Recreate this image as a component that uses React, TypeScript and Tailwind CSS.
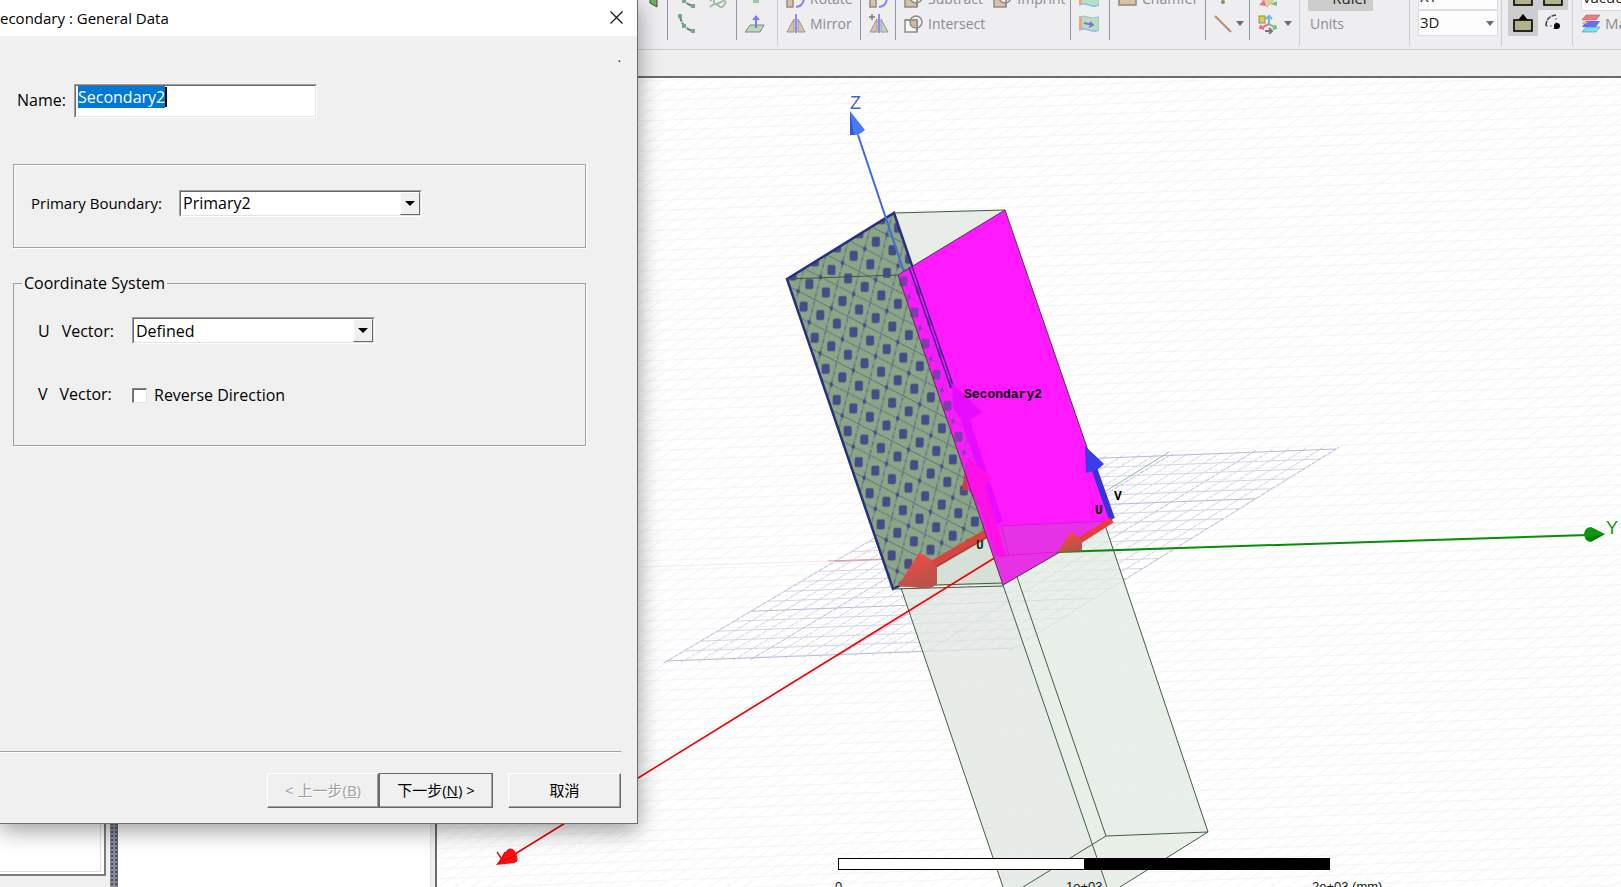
import React, { useEffect, useRef } from "react";

type Point = [number, number];

const GRID_STEPS = 20;
// corners of the drawing plane grid: near-left, near-right, far-left, far-right
const NL: Point = [667, 661];
const NR: Point = [1014, 648];
const FL: Point = [1003, 462];
const FR: Point = [1336, 449];

const lerp = (a: Point, b: Point, t: number): Point => [
  a[0] + (b[0] - a[0]) * t,
  a[1] + (b[1] - a[1]) * t,
];

const gridLines = Array.from({ length: GRID_STEPS + 1 }, (_, i) => {
  const t = i / GRID_STEPS;
  const near = lerp(NL, NR, t);
  const far = lerp(FL, FR, t);
  return {
    major: i % 5 === 0,
    across: [lerp(NL, FL, t), lerp(NR, FR, t)],
    along: [lerp(near, far, -0.01), lerp(near, far, 1.01)],
  };
});

const BackgroundGrid = () => (
  <g stroke="#f5f5f5" strokeWidth="1">
    {Array.from({ length: 88 }, (_, i) => (
      <line key={`h${i}`} x1="400" y1={80 + i * 10} x2="1640" y2={34 + i * 10} />
    ))}
    {Array.from({ length: 150 }, (_, i) => (
      <line key={`d${i}`} x1={430 + i * 17} y1="78" x2={430 + i * 17 - 1340} y2="900" />
    ))}
  </g>
);

const PlaneGrid = () => (
  <g strokeWidth="1">
    {gridLines.map((line, i) => (
      <g key={i} stroke={line.major ? "#b8b8dc" : "#d3d3e7"}>
        <line x1={line.across[0][0]} y1={line.across[0][1]} x2={line.across[1][0]} y2={line.across[1][1]} />
        <line
          x1={line.along[0][0]}
          y1={line.along[0][1]}
          x2={line.along[1][0]}
          y2={line.along[1][1]}
          strokeDasharray="5 1"
        />
      </g>
    ))}
  </g>
);

// keeps the mesh markers upright inside the skewed pattern cell
const MeshDot = ({ x, y }: { x: number; y: number }) => (
  <g transform={`translate(${x} ${y}) matrix(1.069 -0.402 0.265 0.785 0 0)`}>
    <rect x="-4" y="-5" width="8" height="10" rx="2" />
  </g>
);

const Scene = () => (
  <svg
    viewBox="437 78 1184 809"
    preserveAspectRatio="xMinYMin slice"
    className="block h-full w-full"
    role="img"
    aria-label="3D modeler view"
  >
    <defs>
      <pattern
        id="mesh"
        width="40"
        height="40"
        patternUnits="userSpaceOnUse"
        patternTransform="matrix(0.83 0.425 -0.28 1.13 803.8 268.5)"
      >
        <path d="M0 0H40M0 20H40M0 40H40" stroke="#4f5b8c" strokeWidth="0.9" strokeDasharray="2 1" />
        <path d="M0 0V40M20 0V40M40 0V40" stroke="#4f5b8c" strokeWidth="1.1" strokeDasharray="4 1 1 1" />
        <g fill="#454c88">
          <MeshDot x={10} y={10} />
          <MeshDot x={30} y={10} />
          <MeshDot x={10} y={30} />
          <MeshDot x={30} y={30} />
          <circle cx="20" cy="0" r="2" />
          <circle cx="20" cy="40" r="2" />
          <circle cx="0" cy="20" r="2" />
          <circle cx="40" cy="20" r="2" />
        </g>
      </pattern>
      <linearGradient id="cone" x1="0" y1="0" x2="0.4" y2="1">
        <stop offset="0.3" stopColor="#ea4a48" />
        <stop offset="1" stopColor="#b9524a" />
      </linearGradient>
    </defs>

    <BackgroundGrid />
    <PlaneGrid />

    <line x1="640" y1="567" x2="828" y2="561" stroke="#fbe6e6" />
    <line x1="828" y1="561" x2="996" y2="555" stroke="#e09a9a" />
    <line x1="1106" y1="491" x2="1169" y2="452" stroke="#8fbd8f" />

    {/* lower air box */}
    <polygon points="893,589 1003,585 1107,887 1003,887 901,588" fill="#dfe5e1" fillOpacity="0.75" />
    <polygon points="1003,585 1105,525 1208,832 1120,887 1107,887" fill="#e1eae1" fillOpacity="0.75" />
    <path
      d="M901 588L1003 887M1003 585L1107 887M1017 577L1106 836L1208 832L1105 525M1106 836L1023 887M1208 832L1120 887"
      fill="none"
      stroke="#40603f"
    />

    {/* top face and patterned face */}
    <polygon points="894,213 1005,210 898,275 787,279" fill="#e8ede8" />
    <polygon points="894,213 787,279 893,589 1000,523" fill="#8ba587" />
    <polygon points="894,213 787,279 893,589 1000,523" fill="url(#mesh)" />
    <polygon points="901,586 985,531 1003,585" fill="#d6e0d7" />
    <path d="M1000 523L894 213L787 279L893 589L901 585" fill="none" stroke="#27307f" strokeWidth="2.5" />
    <path d="M787 279L898 275M893 589L1003 586M901 586L1003 583M894 213L1005 210" stroke="#3c5a3a" />
    <path d="M858 135L904 272" stroke="#4169dc" strokeWidth="2" />
    <polygon points="850,111 850,135 858,135 865,130" fill="#4b79f5" />
    <polygon points="850,111 850,135 854,135" fill="#2f58cc" />
    <text x="850" y="109" fontSize="18" fill="#3f63d8" fontFamily="Liberation Sans, sans-serif">Z</text>

    {/* red axis */}
    <line x1="996" y1="557" x2="515" y2="854" stroke="#f40000" strokeWidth="1.6" />
    <path d="M496 865L507 850Q512 846 516 853Q520 862 514 863Z" fill="#fa1010" />
    <path d="M499 862L515 856" stroke="#d50000" />
    <path d="M497 852L505 864M505 852L499 864" stroke="#f40000" strokeWidth="1.4" />

    {/* small red arrow behind the magenta face, then the large U arrow */}
    <polygon points="965,470 962,490 971,490" fill="#c7403a" />
    <line x1="932" y1="565" x2="987" y2="533" stroke="#d8443e" strokeWidth="8" />
    <line x1="934" y1="568" x2="989" y2="536" stroke="#a7443c" strokeWidth="2" />
    <path d="M898 586L919 553Q932 557 937 568V584Q930 590 921 588Z" fill="url(#cone)" />

    {/* magenta face */}
    <polygon points="1005,210 898,275 1003,585 1112,520" fill="#ff19ff" />
    <polygon points="898,275 912,266 998,517 985,530" fill="url(#mesh)" opacity="0.65" />
    <path d="M912 266L953 385M909 267L951 388" stroke="#4a1f92" strokeWidth="1.4" />
    <polygon points="1001,526 1110,521 1060,552 1003,585 993,555" fill="#e632e6" />
    <path d="M1001 526L1110 521M1001 526L1009 555" stroke="#d020d0" fill="none" />
    <polygon points="952,383 982,412 970,420 1003,522 997,524 960,418 953,408" fill="#e60cff" />
    <polygon points="968,457 993,478 985,485 1006,555 996,557 977,500 968,490 965,475" fill="#ff10e4" />
    <path d="M1005 210L898 275L1003 585L1060 552M1005 210L1112 520" fill="none" stroke="#4b3a45" />

    {/* green axis */}
    <line x1="1057" y1="552" x2="1588" y2="535" stroke="#0a8c0a" strokeWidth="2" />
    <path d="M1605 534L1591 527Q1585 527 1584 534Q1585 542 1591 542Z" fill="#0c960c" />
    <path d="M1585 538L1605 534L1592 541Z" fill="#087a08" />
    <text x="1606" y="534" fontSize="18" fill="#0c980c" fontFamily="Liberation Sans, sans-serif">Y</text>
    <line x1="1000" y1="556" x2="1058" y2="552" stroke="#e818c4" />

    {/* U and V vectors */}
    <line x1="1112" y1="519" x2="1094" y2="468" stroke="#3434d8" strokeWidth="6" />
    <polygon points="1085,446 1104,464 1097,470 1086,473" fill="#3c3cee" />
    <line x1="1112" y1="520" x2="1079" y2="541" stroke="#e83c38" strokeWidth="6" />
    <path d="M1058 552L1070 532Q1080 535 1082 543V551Z" fill="url(#cone)" />

    <g fontFamily="Liberation Mono, monospace" fontSize="13" fontWeight="700" fill="#000">
      <text x="964" y="398">Secondary2</text>
      <text x="1095" y="514">U</text>
      <text x="1114" y="500">V</text>
      <text x="976" y="549" fill="#233023">U</text>
    </g>

    {/* scale bar */}
    <rect x="838.5" y="858.5" width="491" height="11" fill="#fff" stroke="#000" />
    <rect x="1084" y="858" width="246" height="12" />
    <g fontFamily="Liberation Sans, sans-serif" fontSize="13" fill="#111">
      <text x="835" y="891">0</text>
      <text x="1066" y="891">1e+03</text>
      <text x="1312" y="891">2e+03 (mm)</text>
    </g>
  </svg>
);

const CurveIcon = () => (
  <svg width="20" height="20" viewBox="0 0 20 20" fill="none">
    <path d="M4 2Q6 14 17 17" stroke="#7b7b7b" strokeWidth="2" strokeDasharray="6 1" />
    <g fill="#6fae88">
      <rect x="2" y="0" width="4" height="4" />
      <rect x="6" y="10" width="4" height="4" />
      <rect x="15" y="15" width="4" height="4" />
    </g>
  </svg>
);

const WaveIcon = () => (
  <svg width="20" height="20" viewBox="0 0 20 20" fill="none" stroke="#9dbfa6" strokeWidth="2">
    <path d="M2 12Q7 7 6 12T11 14T18 10M2 18Q7 13 11 17T18 12" />
  </svg>
);

const SheetIcon = () => (
  <svg width="20" height="20" viewBox="0 0 20 20">
    <path d="M5 11H19L15 18H0Z" fill="#b7d9bc" />
    <path d="M5 11H19L15 18H0Z" fill="none" stroke="#7d8a7d" />
    <path d="M11 14V5" stroke="#7c7cf0" strokeWidth="2" />
    <path d="M7 6L11 1L15 6Z" fill="#7c7cf0" />
  </svg>
);

const MirrorIcon = ({ plus = false }: { plus?: boolean }) => (
  <svg width="20" height="20" viewBox="0 0 20 20">
    <path d="M8 5V18H1Z" fill="#d9c0a6" stroke="#9a948e" />
    <path d="M12 5V18H19Z" fill={plus ? "#b5dcba" : "#d9c0a6"} stroke="#9a948e" />
    <path d="M10 0V19" stroke="#8a8afc" strokeWidth="2" />
    {plus && <path d="M3 0V6M0 3H6" stroke="#777" strokeWidth="1.4" />}
  </svg>
);

const RotateIcon = () => (
  <svg width="20" height="20" viewBox="0 0 20 20" fill="none">
    <rect x="1" y="5" width="6" height="13" fill="#d9c0a6" stroke="#918b86" strokeWidth="1.5" />
    <path d="M18 8Q18 17 10 18" stroke="#8484fa" strokeWidth="2" />
  </svg>
);

const BooleanIcon = ({ filled = false }: { filled?: boolean }) => (
  <svg width="20" height="20" viewBox="0 0 20 20" fill="none" stroke="#8c8c8c" strokeWidth="1.5">
    <rect x="1" y="6" width="12" height="12" fill={filled ? "#d9c0a6" : "#f8f8f8"} />
    <path d="M6 6H13V13Q6 14 6 6Z" fill={filled ? "#efeff1" : "#d9b793"} stroke="none" />
    <circle cx="12" cy="8" r="6" />
    <path d="M1 6H13V18" />
  </svg>
);

const FlagIcon = ({ arrow = false }: { arrow?: boolean }) => (
  <svg width="20" height="20" viewBox="0 0 20 20">
    <path d="M0 3Q5 1 9 3T20 3V16Q15 19 10 16T0 16Z" fill="#b9dcc4" stroke="#9abfc0" />
    <path d="M0 3H3V16H0Z" fill="#f0a582" />
    <path d="M0 16Q5 14 10 16T20 16" stroke="#8fc0ec" strokeWidth="1.5" fill="none" />
    {arrow && <path d="M5 9L14 11M11 8L14 11L10 13" stroke="#7878c8" strokeWidth="1.8" fill="none" />}
  </svg>
);

const BoxIcon = () => (
  <svg width="20" height="20" viewBox="0 0 20 20">
    <rect x="1" y="3" width="17" height="13" fill="#d9c0a6" stroke="#8c8680" strokeWidth="1.5" />
  </svg>
);

const LineIcon = () => (
  <svg width="18" height="20" viewBox="0 0 18 20">
    <path d="M1 2L17 18" stroke="#b98d66" strokeWidth="2" />
  </svg>
);

const AxesIcon = () => (
  <svg width="20" height="20" viewBox="0 0 20 20" fill="none" strokeWidth="2">
    <path d="M11 10V2M8 5L11 2L14 5" stroke="#72b0ec" />
    <path d="M11 10L18 14M15 15L18 14L17 11" stroke="#74c27c" />
    <path d="M11 10L3 14M3 11L2 14L6 15" stroke="#f0708a" />
    <rect x="1" y="2" width="6" height="7" fill="#d8cf50" stroke="#8f8a58" strokeWidth="1" />
    <path d="M7 17H14M11 14L14 17L11 20" stroke="#7a7a7a" />
  </svg>
);

const LayersBoxIcon = () => (
  <svg width="20" height="20" viewBox="0 0 20 20">
    <path d="M3 10L10 7L17 10L9 18Z" fill="#e0cf9c" stroke="#c9b98c" />
    <path d="M1 16L6 11L8 17Z" fill="#f0708a" />
    <path d="M12 15L19 12V17Z" fill="#74c27c" />
  </svg>
);

const OliveBoxIcon = ({ arrow = false }: { arrow?: boolean }) => (
  <svg width="20" height="20" viewBox="0 0 20 20">
    <rect x="1" y="7" width="18" height="11" fill="#b2b18c" stroke="#000" strokeWidth="1.6" />
    {arrow && <path d="M5 7L10 1L15 7Z" fill="#000" />}
  </svg>
);

const ArcIcon = () => (
  <svg width="20" height="20" viewBox="0 0 20 20" fill="none">
    <path d="M3 13Q3 3 13 2" stroke="#444" strokeWidth="1.6" strokeDasharray="5 1" />
    <path d="M3 13H13V3" stroke="#6b6bd0" strokeDasharray="2 2" />
    <circle cx="14" cy="13" r="3" fill="#000" />
    <path d="M10 16H14V13Z" fill="#000" />
  </svg>
);

const MaterialIcon = () => (
  <svg width="20" height="20" viewBox="0 0 20 20">
    <path d="M5 13H19L15 18H1Z" fill="#6fe6f4" stroke="#77808c" strokeWidth="0.6" />
    <path d="M5 7H19L15 13H1Z" fill="#6b6bf2" />
    <path d="M5 1H19L15 6H1Z" fill="#f27878" stroke="#8c7777" strokeWidth="0.6" />
    <path d="M2 8H8L4 10H1Z" fill="#e8b070" />
  </svg>
);

const Caret = () => <span className="border-x-4 border-t-[5px] border-x-transparent border-t-[#6c6c70]" />;

const toolButton = "flex h-[25px] items-center gap-1 whitespace-nowrap text-[#8b8b8f]";
const snapButton = "flex h-[26px] w-[30px] items-center justify-center";
const group = "mb-[9px] flex shrink-0 border-r border-[#8d97ab] pb-1 pl-2";
const panelEnd = "mb-[3px] flex shrink-0 border-r border-[#cbcbdc] pb-[10px] pl-2";

const Ribbon = () => (
  <div className="flex h-[50px] items-end overflow-hidden border-b border-[#cbcbd8] bg-[#eeeef1] pl-[638px] text-sm">
    <div className={`${group} w-[30px]`}>
      <div>
        <button className={toolButton} aria-label="Cover face">
          <svg width="14" height="20" viewBox="0 0 14 20">
            <path d="M4 4L11 8V18L4 14Z" fill="#6fae6f" stroke="#444" />
          </svg>
        </button>
        <div className="h-[25px]" />
      </div>
    </div>
    <div className={`${group} w-[69px] gap-3`}>
      <div>
        <button className={toolButton} aria-label="Arc"><CurveIcon /></button>
        <button className={toolButton} aria-label="Spline"><CurveIcon /></button>
      </div>
      <div>
        <button className={toolButton} aria-label="Equation curve"><WaveIcon /></button>
      </div>
    </div>
    <div className={`${panelEnd} w-[41px]`}>
      <div>
        <button className={toolButton} aria-label="Point">
          <svg width="20" height="20" viewBox="0 0 20 20"><rect x="8" y="9" width="6" height="5" fill="#93cf9f" /></svg>
        </button>
        <button className={toolButton} aria-label="Plane"><SheetIcon /></button>
      </div>
    </div>
    <div className={`${group} w-[83px]`}>
      <div>
        <button className={toolButton}><RotateIcon />Rotate</button>
        <button className={toolButton}><MirrorIcon />Mirror</button>
      </div>
    </div>
    <div className={`${group} w-[35px]`}>
      <div>
        <button className={toolButton} aria-label="Duplicate around axis"><RotateIcon /></button>
        <button className={toolButton} aria-label="Duplicate mirror"><MirrorIcon plus /></button>
      </div>
    </div>
    <div className={`${group} w-[175px] gap-2`}>
      <div>
        <button className={toolButton}><BooleanIcon filled />Subtract</button>
        <button className={toolButton}><BooleanIcon />Intersect</button>
      </div>
      <div>
        <button className={toolButton}><BooleanIcon filled />Imprint</button>
      </div>
    </div>
    <div className={`${group} w-[39px]`}>
      <div>
        <button className={toolButton} aria-label="Sheet"><FlagIcon /></button>
        <button className={toolButton} aria-label="Wrap sheet"><FlagIcon arrow /></button>
      </div>
    </div>
    <div className={`${group} w-[96px]`}>
      <div>
        <button className={toolButton}><BoxIcon />Chamfer</button>
        <div className="h-[25px]" />
      </div>
    </div>
    <div className={`${group} w-[44px]`}>
      <div>
        <button className={toolButton} aria-label="Draw point">
          <svg width="20" height="20" viewBox="0 0 20 20"><circle cx="9" cy="13" r="2" fill="#94855a" /></svg>
        </button>
        <button className={toolButton} aria-label="Draw line"><LineIcon /><Caret /></button>
      </div>
    </div>
    <div className={`${panelEnd} w-[50px]`}>
      <div>
        <button className={toolButton} aria-label="Relative plane"><LayersBoxIcon /></button>
        <button className={`${toolButton} gap-[6px]`} aria-label="Relative coordinate system"><AxesIcon /><Caret /></button>
      </div>
    </div>
    <div className={`${panelEnd} w-[110px]`}>
      <div>
        <button className="flex h-[25px] w-[65px] items-center justify-end bg-[#cdcdcd] pr-1 text-[15px] text-[#222]">Ruler</button>
        <button className={`${toolButton} pl-[2px]`}>Units</button>
      </div>
    </div>
    <div className={`${panelEnd} w-[92px]`}>
      <div>
        <ToolSelect label="Drawing plane" value="XY" />
        <ToolSelect label="Movement mode" value="3D" />
      </div>
    </div>
    <div className={`${panelEnd} w-[71px]`}>
      <div className="-ml-[2px] grid grid-cols-2">
        <button className={`${snapButton} bg-[#cdcdcd]`} aria-label="Snap grid"><OliveBoxIcon /></button>
        <button className={`${snapButton} bg-[#cdcdcd]`} aria-label="Snap vertex"><OliveBoxIcon /></button>
        <button className={`${snapButton} bg-[#cdcdcd]`} aria-label="Snap edge center"><OliveBoxIcon arrow /></button>
        <button className={snapButton} aria-label="Snap arc center"><ArcIcon /></button>
      </div>
    </div>
    <div className="mb-[3px] shrink-0 pb-[10px] pl-2">
      <ToolSelect label="Material" value="vacuum" />
      <button className={`${toolButton} text-[15px]`}><MaterialIcon />Material</button>
    </div>
  </div>
);

const ToolSelect = ({ label, value }: { label: string; value: string }) => (
  <div className="relative flex h-[26px] w-20 items-center">
    <select
      aria-label={label}
      defaultValue={value}
      className="h-[26px] w-full appearance-none border border-[#dcdce4] bg-[#fdfdfd] pl-px text-[15px] text-[#222]"
    >
      <option>{value}</option>
    </select>
    <span className="pointer-events-none absolute right-1 border-x-4 border-t-[5px] border-x-transparent border-t-[#6c6c70]" />
  </div>
);

const DialogSelect = ({ id, value }: { id: string; value: string }) => (
  <div className="relative w-[243px] border border-t-[#a0a0a0] border-r-white border-b-white border-l-[#a0a0a0]">
    <select
      id={id}
      defaultValue={value}
      className="block h-[25px] w-full appearance-none border border-t-[#696969] border-r-[#e3e3e3] border-b-[#e3e3e3] border-l-[#696969] bg-white pl-[2px] text-base leading-5 outline-none"
    >
      <option>{value}</option>
    </select>
    <span className="pointer-events-none absolute top-px right-px flex h-[23px] w-5 items-center justify-center border border-t-white border-r-[#696969] border-b-[#696969] border-l-white bg-[#f0f0f0]">
      <span className="border-x-[5px] border-t-[5px] border-x-transparent border-t-black" />
    </span>
  </div>
);

const wizardButton =
  "h-[35px] border border-t-white border-r-[#696969] border-b-[#696969] border-l-white bg-[#f0f0f0] pb-[2px] text-[15px] shadow-[inset_-1px_-1px_0_#a0a0a0]";

const BoundaryDialog = () => {
  const nameRef = useRef<HTMLInputElement>(null);

  useEffect(() => {
    nameRef.current?.focus();
    nameRef.current?.select();
  }, []);

  return (
    <div
      role="dialog"
      aria-label="Secondary : General Data"
      className="absolute top-0 left-0 flex h-[824px] w-[638px] flex-col border-r border-b border-[#6c6c6c] bg-[#f0f0f0] text-base leading-5 text-black shadow-[0_6px_22px_rgba(0,0,0,0.4)]"
    >
      <div className="flex h-9 shrink-0 items-center justify-between bg-white pr-[14px] pb-px text-[15px]">
        <span>econdary : General Data</span>
        <button aria-label="Close">
          <svg width="13" height="13" viewBox="0 0 13 13" stroke="#111" strokeWidth="1.2">
            <path d="M0.5 0.5L12.5 12.5M12.5 0.5L0.5 12.5" />
          </svg>
        </button>
      </div>

      <div className="flex grow flex-col pl-[13px]">
        <div className="h-12 pt-[14px] pr-4 text-right text-xs leading-4">.</div>
        <div className="flex items-center pl-1">
          <label htmlFor="name" className="w-[57px] pb-[2px]">Name:</label>
          <div className="relative border border-t-[#a0a0a0] border-r-white border-b-white border-l-[#a0a0a0]">
            <input
              id="name"
              ref={nameRef}
              defaultValue="Secondary2"
              className="block h-8 w-[241px] border border-t-[#696969] border-r-[#e3e3e3] border-b-[#e3e3e3] border-l-[#696969] bg-white pb-[9px] pl-[2px] text-base leading-5 outline-none selection:bg-[#0078d7] selection:text-white"
            />
            <span className="absolute top-[2px] left-[90px] h-5 w-[2px] bg-black" />
          </div>
        </div>

        <div className="mt-[46px] flex h-[84px] w-[573px] items-center border border-[#a0a0a0] pb-[6px] pl-[17px] shadow-[1px_1px_0_#fff,inset_1px_1px_0_#fff]">
          <label htmlFor="primary" className="w-[148px] text-[15px]">Primary Boundary:</label>
          <DialogSelect id="primary" value="Primary2" />
        </div>

        <fieldset className="mt-[25px] h-[173px] w-[573px] border border-[#a0a0a0] pl-6 shadow-[1px_1px_0_#fff]">
          <legend className="-ml-4 px-[2px]">Coordinate System</legend>
          <div className="mt-6 flex items-center">
            <label htmlFor="u-vector" className="flex w-[94px] gap-3">
              <span>U</span>
              <span>Vector:</span>
            </label>
            <DialogSelect id="u-vector" value="Defined" />
          </div>
          <div className="mt-10 flex items-center">
            <span className="flex w-[94px] gap-3 pb-[2px]">
              <span>V</span>
              <span>Vector:</span>
            </span>
            <label className="flex items-center gap-[7px]">
              <input
                type="checkbox"
                className="size-[15px] appearance-none border border-t-[#808080] border-r-[#e3e3e3] border-b-[#e3e3e3] border-l-[#808080] bg-white shadow-[inset_1px_1px_0_#696969]"
              />
              Reverse Direction
            </label>
          </div>
        </fieldset>
      </div>

      <div className="mr-4 border-t border-[#a0a0a0] shadow-[inset_0_1px_0_#fff]">
        <div className="flex justify-end pt-[21px] pb-[15px]">
          <button disabled className={`${wizardButton} w-[112px] text-[#a0a0a0] [text-shadow:1px_1px_0_#fff]`}>
            &lt; 上一步(<u>B</u>)
          </button>
          <button className={`${wizardButton} w-[114px] outline outline-1 -outline-offset-1 outline-[#696969]`}>
            下一步(<u>N</u>) &gt;
          </button>
          <button className={`${wizardButton} ml-[15px] w-[113px]`}>取消</button>
        </div>
      </div>
    </div>
  );
};

const SidePanels = () => (
  <div className="flex w-[437px] shrink-0 border-r-2 border-[#6b6b6b] bg-[#f0f0f0]">
    <div className="w-[110px] pr-1 pb-[11px]">
      <div className="h-full border-r-2 border-b-2 border-[#7c7c7c] bg-white pr-[3px] pb-[2px]">
        <div className="h-full border-r border-b border-[#dedede]" />
      </div>
    </div>
    <div className="w-2 border-r border-[#666] bg-[#8b8b8b] bg-[radial-gradient(#34508c_1px,transparent_1px)] bg-[size:4px_4px]" />
    <div className="grow bg-white" />
    <div className="w-[5px] border-l border-[#e3e3e3]" />
  </div>
);

const App = () => {
  return (
    <div className="relative flex h-screen flex-col overflow-hidden bg-[#f0f0f0] font-['Open_Sans','Noto_Sans_CJK_SC',sans-serif]">
      <Ribbon />
      <div className="h-[26px] shrink-0 bg-[#efefef]" />
      <div className="flex min-h-0 grow border-t-2 border-[#6b6b6b]">
        <SidePanels />
        <main className="min-w-0 grow overflow-hidden bg-white">
          <Scene />
        </main>
      </div>
      <BoundaryDialog />
    </div>
  );
};

export default App;
